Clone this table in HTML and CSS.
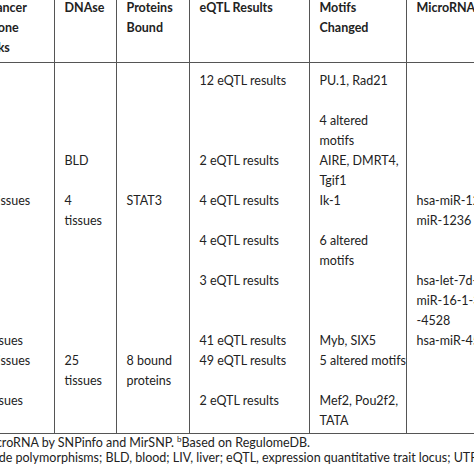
FILE: index.html
```html
<!DOCTYPE html>
<html>
<head>
<meta charset="utf-8">
<link rel="stylesheet" href="styles.css">
</head>
<body>
<div class="sheet">
<table class="snp">
  <colgroup>
    <col class="c1"><col class="c2"><col class="c3"><col class="c4"><col class="c5"><col class="c6">
  </colgroup>
  <thead>
    <tr>
      <th>Enhancer<br>Histone<br>Marks</th>
      <th>DNAse</th>
      <th>Proteins<br>Bound</th>
      <th>eQTL Results</th>
      <th>Motifs<br>Changed</th>
      <th>MicroRNA<sup>a</sup></th>
    </tr>
  </thead>
  <tbody>
    <tr class="l2 first">
      <td></td><td></td><td></td>
      <td>12 eQTL results</td>
      <td>PU.1, Rad21</td>
      <td></td>
    </tr>
    <tr class="l2">
      <td></td><td></td><td></td><td></td>
      <td>4 altered<br>motifs</td>
      <td></td>
    </tr>
    <tr class="l2">
      <td></td>
      <td>BLD</td>
      <td></td>
      <td>2 eQTL results</td>
      <td>AIRE, DMRT4,<br>Tgif1</td>
      <td></td>
    </tr>
    <tr class="l2">
      <td>13 tissues</td>
      <td>4<br>tissues</td>
      <td>STAT3</td>
      <td>4 eQTL results</td>
      <td>Ik-1</td>
      <td>hsa-miR-1236,<br>miR-1236</td>
    </tr>
    <tr class="l2">
      <td></td><td></td><td></td>
      <td>4 eQTL results</td>
      <td>6 altered<br>motifs</td>
      <td></td>
    </tr>
    <tr class="l3">
      <td></td><td></td><td></td>
      <td>3 eQTL results</td>
      <td></td>
      <td>hsa-let-7d-3p,<br>miR-16-1-3p, miR<br>-4528</td>
    </tr>
    <tr class="l1">
      <td>8 tissues</td>
      <td></td><td></td>
      <td>41 eQTL results</td>
      <td>Myb, SIX5</td>
      <td>hsa-miR-4527</td>
    </tr>
    <tr class="l2">
      <td>25 tissues</td>
      <td>25<br>tissues</td>
      <td>8 bound<br>proteins</td>
      <td>49 eQTL results</td>
      <td>5 altered motifs</td>
      <td></td>
    </tr>
    <tr class="l2 last">
      <td>6 tissues</td>
      <td></td><td></td>
      <td>2 eQTL results</td>
      <td>Mef2, Pou2f2,<br>TATA</td>
      <td></td>
    </tr>
  </tbody>
</table>
<p class="note n1">Notes: <sup>a</sup>Predicted microRNA by SNPinfo and MirSNP. <sup>b</sup>Based on RegulomeDB.</p>
<p class="note n2">Abbreviations: SNP, single nucleotide polymorphisms; BLD, blood; LIV, liver; eQTL, expression quantitative trait locus; UTR, untranslated region.</p>
</div>
</body>
</html>
```

FILE: styles.css
```css
html, body {
  margin: 0;
  padding: 0;
  background: #fff;
  overflow: hidden;
  width: 474px;
  height: 474px;
}

.sheet {
  margin-left: -35px;
  margin-top: -2px;
  width: 800px;
  font-family: "Lato", "Open Sans", "DejaVu Sans", sans-serif;
  font-size: 12.5px;
  line-height: 20px;
  color: #222;
}

.snp {
  border-collapse: collapse;
  table-layout: fixed;
  width: 600px;
}

.c1 { width: 89px; }
.c2 { width: 62px; }
.c3 { width: 73px; }
.c4 { width: 120px; }
.c5 { width: 97px; }
.c6 { width: 159px; }

.snp th,
.snp td {
  text-align: left;
  vertical-align: top;
  padding: 0 4px 0 10px;
  border-left: 1.5px solid #555;
  white-space: nowrap;
  overflow: hidden;
}

.snp th:first-child,
.snp td:first-child {
  border-left: none;
}

.snp th {
  font-weight: bold;
  padding-bottom: 4px;
  border-bottom: 1.5px solid #555;
}

.snp th sup,
.note sup {
  font-size: 8px;
  line-height: 0;
  vertical-align: baseline;
  position: relative;
  top: -0.6em;
}

.snp tr.l1 td { height: 20px; }
.snp tr.l2 td { height: 40px; }
.snp tr.l3 td { height: 60px; }

.snp tr.first td { padding-top: 8px; }
.snp tr.last td { padding-bottom: 2px; border-bottom: 1.5px solid #555; }

.note {
  margin: 0;
  line-height: 15px;
  white-space: nowrap;
}

.n1 { margin-top: 1px; margin-left: -81px; }
.n2 { margin-left: -156px; }
```
